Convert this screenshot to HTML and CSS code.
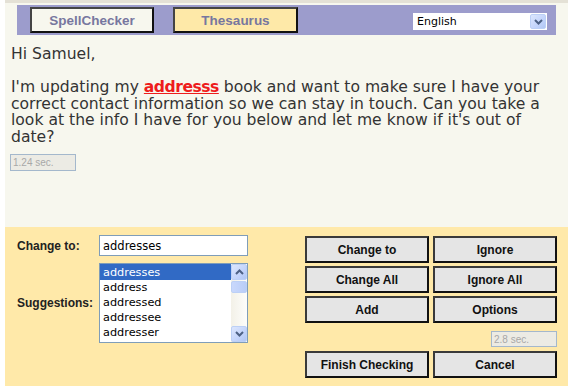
FILE: index.html
```html
<!DOCTYPE html>
<html>
<head>
<meta charset="utf-8">
<link rel="stylesheet" href="styles.css">
</head>
<body>
<div class="page">
  <div class="topbar">
    <div class="tab tab-spell">SpellChecker</div>
    <div class="tab tab-thes">Thesaurus</div>
    <div class="lang-select">
      <span class="lang-value">English</span>
      <span class="xp-btn drop-btn"><svg width="9" height="6" viewBox="0 0 9 6"><path d="M1 1 L4.5 4.5 L8 1" fill="none" stroke="#4d6185" stroke-width="2"/></svg></span>
    </div>
  </div>
  <div class="message">
    <p class="msg-text">Hi Samuel,<br><br>I'm updating my <span class="misspelled">addresss</span> book and want to make sure I have your correct contact information so we can stay in touch. Can you take a look at the info I have for you below and let me know if it's out of date?</p>
    <div class="timer">1.24 sec.</div>
  </div>
  <div class="panel">
    <div class="fields">
      <label class="field-label">Change to:</label>
      <div class="text-input">addresses</div>
      <label class="field-label">Suggestions:</label>
      <div class="listbox">
        <ul class="items">
          <li class="item selected">addresses</li>
          <li class="item">address</li>
          <li class="item">addressed</li>
          <li class="item">addressee</li>
          <li class="item">addresser</li>
        </ul>
        <div class="scrollbar">
          <span class="xp-btn scroll-btn"><svg width="9" height="6" viewBox="0 0 9 6"><path d="M1 5 L4.5 1.5 L8 5" fill="none" stroke="#4d6185" stroke-width="2"/></svg></span>
          <span class="thumb"></span>
          <span class="track"></span>
          <span class="xp-btn scroll-btn"><svg width="9" height="6" viewBox="0 0 9 6"><path d="M1 1 L4.5 4.5 L8 1" fill="none" stroke="#4d6185" stroke-width="2"/></svg></span>
        </div>
      </div>
    </div>
    <div class="actions">
      <div class="btn-grid">
        <button class="btn">Change to</button>
        <button class="btn">Ignore</button>
        <button class="btn">Change All</button>
        <button class="btn">Ignore All</button>
        <button class="btn">Add</button>
        <button class="btn">Options</button>
      </div>
      <div class="timer timer-right">2.8 sec.</div>
      <div class="btn-grid">
        <button class="btn">Finish Checking</button>
        <button class="btn">Cancel</button>
      </div>
    </div>
  </div>
</div>
</body>
</html>
```

FILE: styles.css
```css
html, body {
  margin: 0;
  padding: 0;
  background: #ffffff;
}

.page {
  margin-left: 5px;
  width: 563px;
  background: #f7f7ee;
  border-top: 3px solid #e4e1d6;
}

.topbar {
  margin: 2px 12px 0 12px;
  height: 30px;
  background: #9c9ccc;
  display: flex;
  align-items: flex-start;
  padding-left: 13px;
  box-sizing: border-box;
}

.tab {
  margin-top: 2px;
  height: 26px;
  box-sizing: border-box;
  border: 2px solid;
  border-color: #444 #111 #111 #444;
  display: flex;
  align-items: center;
  justify-content: center;
  font-family: "Liberation Sans", Arial, sans-serif;
  font-weight: bold;
  font-size: 13.5px;
  color: #77779f;
}

.tab-spell {
  width: 124px;
  background: #f7f7ee;
}

.tab-thes {
  width: 125px;
  margin-left: 19px;
  background: #fee9a8;
}

.lang-select {
  margin-left: auto;
  margin-right: 8px;
  margin-top: 7px;
  width: 136px;
  height: 19px;
  box-sizing: border-box;
  background: #ffffff;
  border: 1px solid #9c9ccc;
  display: flex;
  align-items: center;
  font-family: "DejaVu Sans", Verdana, sans-serif;
  font-size: 11px;
  color: #000;
}

.lang-value {
  padding-left: 4px;
  flex: 1;
}

.xp-btn {
  display: flex;
  align-items: center;
  justify-content: center;
  box-sizing: border-box;
  border: 1px solid #bcd0f6;
  border-radius: 2px;
  background: linear-gradient(135deg, #dce6fd 0%, #c3d4fb 60%, #b1c6f4 100%);
}

.drop-btn {
  width: 16px;
  height: 15px;
  margin-right: 1px;
}

.message {
  height: 192px;
  box-sizing: border-box;
  padding: 11px 6px 0 6px;
}

.msg-text {
  margin: 0;
  font-family: "DejaVu Sans", Verdana, sans-serif;
  font-size: 15.6px;
  line-height: 16.6px;
  color: #333333;
}

.misspelled {
  color: #ee1c1c;
  font-weight: bold;
  letter-spacing: -0.5px;
  text-decoration: underline;
}

.timer {
  width: 66px;
  height: 17px;
  box-sizing: border-box;
  border: 1px solid #a4b8cc;
  background: #ecebe4;
  font-family: "Liberation Sans", Arial, sans-serif;
  font-size: 10px;
  color: #a8a8a8;
  display: flex;
  align-items: center;
  padding-left: 2px;
  margin-top: 8px;
  margin-left: -1px;
}

.panel {
  height: 159px;
  box-sizing: border-box;
  background: #ffe9a9;
  padding: 8px 11px 0 12px;
  display: flex;
  align-items: flex-start;
}

.fields {
  display: grid;
  grid-template-columns: 82px 149px;
  grid-template-rows: 21px 80px;
  row-gap: 7px;
  align-items: center;
}

.field-label {
  font-family: "Liberation Sans", Arial, sans-serif;
  font-weight: bold;
  font-size: 12px;
  color: #222;
}

.text-input {
  height: 21px;
  box-sizing: border-box;
  border: 1px solid #7f9db9;
  background: #fff;
  font-family: "DejaVu Sans", Verdana, sans-serif;
  font-size: 11.5px;
  color: #000;
  display: flex;
  align-items: center;
  padding-left: 3px;
}

.listbox {
  height: 80px;
  box-sizing: border-box;
  border: 1px solid #7f9db9;
  background: #fff;
  display: flex;
}

.items {
  list-style: none;
  margin: 0;
  padding: 0;
  flex: 1;
  font-family: "DejaVu Sans", Verdana, sans-serif;
  font-size: 11.3px;
  color: #000;
}

.item {
  height: 15px;
  line-height: 15px;
  padding-left: 3px;
}

.item.selected {
  background: #316ac5;
  color: #fff;
  height: 16px;
  line-height: 17px;
}

.scrollbar {
  width: 16px;
  display: flex;
  flex-direction: column;
  background: linear-gradient(90deg, #f3f1e8 0%, #fdfdfb 100%);
}

.scroll-btn {
  width: 16px;
  height: 16px;
}

.thumb {
  margin-top: 1px;
  height: 12px;
  box-sizing: border-box;
  border: 1px solid #bcd0f6;
  border-radius: 2px;
  background: linear-gradient(90deg, #c9d8fc 0%, #b9cdf8 100%);
}

.track {
  flex: 1;
}

.actions {
  margin-left: auto;
  width: 252px;
  padding-top: 1px;
  display: flex;
  flex-direction: column;
}

.btn-grid {
  display: grid;
  grid-template-columns: 124px 124px;
  grid-auto-rows: 27px;
  gap: 3px 4px;
}

.btn {
  margin: 0;
  padding: 0;
  box-sizing: border-box;
  border: 2px solid;
  border-color: #3a3a3a #111 #111 #3a3a3a;
  background: #e5e5e5;
  font-family: "Liberation Sans", Arial, sans-serif;
  font-weight: bold;
  font-size: 12px;
  color: #111;
}

.timer-right {
  margin: 8px 0 4px auto;
  height: 16px;
}
```
